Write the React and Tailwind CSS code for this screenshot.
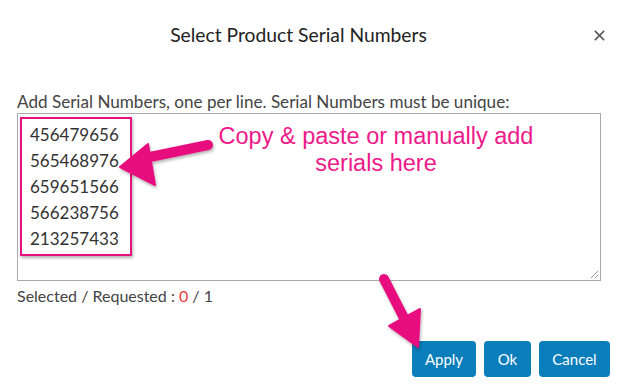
import React from "react";

const serials = ["456479656", "565468976", "659651566", "566238756", "213257433"];

function Arrows() {
  return (
    <svg className="absolute inset-0 pointer-events-none" width="624" height="388" viewBox="0 0 624 388">
      <defs>
        <filter id="sh" x="-20%" y="-20%" width="140%" height="140%">
          <feDropShadow dx="1" dy="2" stdDeviation="1.5" floodColor="#000" floodOpacity="0.3" />
        </filter>
      </defs>
      <g filter="url(#sh)" fill="#e8107f" stroke="#e8107f" strokeLinecap="round" strokeLinejoin="round">
        <line x1="208" y1="145" x2="145" y2="158" strokeWidth="10" />
        <polygon points="120,167 148,144 155,185" strokeWidth="2" />
        <line x1="384" y1="279" x2="405" y2="320" strokeWidth="10" />
        <polygon points="418,347 389,326 420,309" strokeWidth="2" />
      </g>
    </svg>
  );
}

export default function App() {
  return (
    <div className="relative w-[624px] h-[388px] bg-white text-[#333] overflow-hidden" style={{ fontFamily: "Lato, 'Open Sans', sans-serif" }}>
      <div className="relative h-[70px] flex items-center justify-center">
        <h2 className="text-[19.3px] text-[#222] pr-[27px]">Select Product Serial Numbers</h2>
        <button className="absolute right-[18px] top-[29px] text-[#555]">
          <svg width="13" height="13" viewBox="0 0 14 14" stroke="currentColor" strokeWidth="1.6">
            <line x1="2" y1="2" x2="12" y2="12" />
            <line x1="12" y1="2" x2="2" y2="12" />
          </svg>
        </button>
      </div>

      <div className="px-[17px]">
        <p className="text-[17.1px] leading-[20px] mt-[22px] text-[#444]">
          Add Serial Numbers, one per line. Serial Numbers must be unique:
        </p>
        <div className="relative mt-[1px] w-[584px] h-[168px] border border-[#aaa]">
          <div className="ml-[2px] mt-[3px] w-[112px] h-[139px] border-[2.5px] border-[#e8107f] shadow-[1px_2px_3px_rgba(0,0,0,0.3)] pl-[8px] pt-[3px]">
            {serials.map((s) => (
              <div key={s} className="text-[17px] leading-[26px] text-[#333]">{s}</div>
            ))}
          </div>
          <div
            className="absolute left-[190px] top-[9px] w-[336px] text-center text-[23.5px] leading-[27px] text-[#ee1a8a]"
            style={{ fontFamily: "'Liberation Sans', Arial, sans-serif" }}
          >
            Copy &amp; paste or manually add<br />serials here
          </div>
          <svg className="absolute right-[1px] bottom-[1px]" width="9" height="9" viewBox="0 0 9 9" stroke="#999" strokeWidth="1">
            <line x1="8" y1="1" x2="1" y2="8" />
            <line x1="8" y1="5" x2="5" y2="8" />
          </svg>
        </div>
        <p className="text-[16px] leading-[20px] mt-[5px] text-[#444]">
          Selected / Requested : <span className="text-[#f03a3a]">0</span> / 1
        </p>
      </div>

      <div className="absolute right-[14px] top-[341px] flex gap-[8px]">
        <button className="h-[36px] w-[64px] rounded-[4px] bg-[#0a7dbb] text-white text-[15px]">Apply</button>
        <button className="h-[36px] w-[47px] rounded-[4px] bg-[#0a7dbb] text-white text-[15px]">Ok</button>
        <button className="h-[36px] w-[71px] rounded-[4px] bg-[#0a7dbb] text-white text-[15px]">Cancel</button>
      </div>

      <Arrows />
    </div>
  );
}
